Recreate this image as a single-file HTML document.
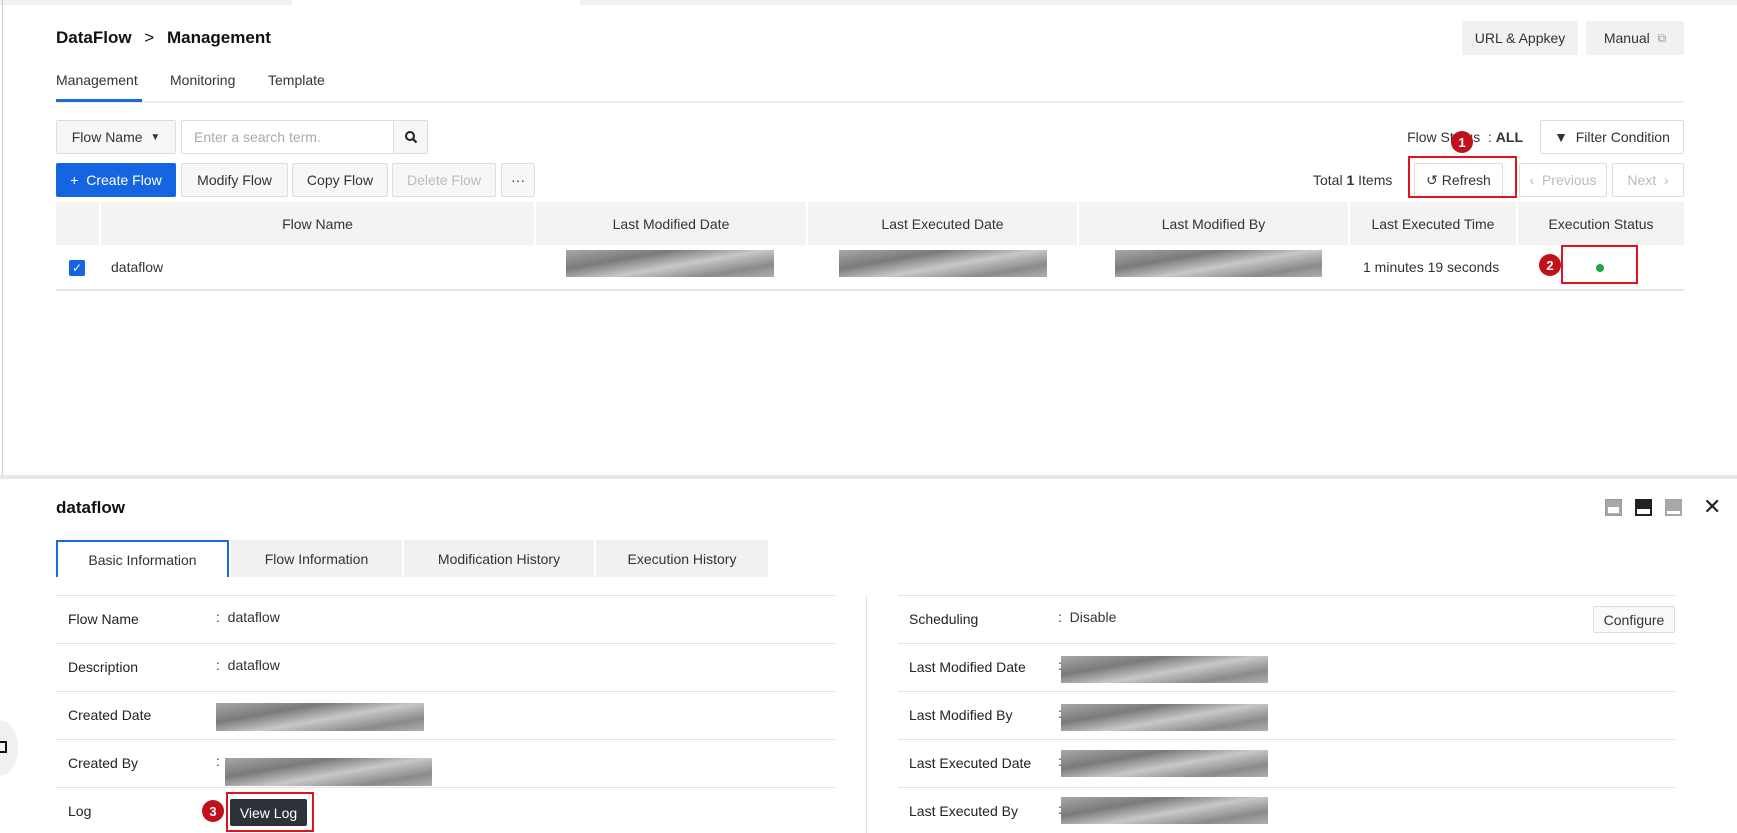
<!DOCTYPE html>
<html><head><meta charset="utf-8"><style>
*{box-sizing:border-box;margin:0;padding:0}
body{width:1737px;height:833px;overflow:hidden;background:#fff;font-family:"Liberation Sans",Arial,sans-serif;font-size:14px;color:#333;position:relative}
.a{position:absolute}
.btn{position:absolute;border:1px solid #ddd;background:#f7f7f7;display:flex;align-items:center;justify-content:center;font-size:14px;color:#333;border-radius:2px}
.blur{position:absolute;background:linear-gradient(170deg,#a8a8a8,#7a7a7a 30%,#c8c8c8 55%,#8a8a8a 80%,#b0b0b0)}
.th{position:absolute;top:202px;height:43px;background:#f3f3f3;display:flex;align-items:center;justify-content:center;font-size:14px;border-right:2px solid #fff}
.red{position:absolute;border:2px solid #e0141e}
.badge{position:absolute;width:22px;height:22px;border-radius:50%;background:#c0101a;color:#fff;font-weight:bold;font-size:13px;display:flex;align-items:center;justify-content:center}
.lbl{position:absolute;font-size:14px;color:#222}
.hl{position:absolute;height:1px;background:#e3e3e3}
</style></head><body>
<div class="a" style="left:0;top:0;width:1737px;height:5px;background:#f1f1f1"></div>
<div class="a" style="left:292px;top:0;width:288px;height:5px;background:#fff"></div>
<div class="a" style="left:2px;top:0;width:1px;height:476px;background:#ccc"></div>
<div class="a" style="left:56px;top:28px;font-size:17px;font-weight:bold;color:#111">DataFlow <span style="font-weight:normal;margin:0 8px">&gt;</span> Management</div>
<div class="btn" style="left:1462px;top:21px;width:116px;height:34px;background:#f1f1f1;border-color:#f1f1f1">URL &amp; Appkey</div>
<div class="btn" style="left:1586px;top:21px;width:98px;height:34px;background:#f1f1f1;border-color:#f1f1f1">Manual &nbsp;<span style="color:#999;font-size:12px">⧉</span></div>
<div class="a" style="left:56px;top:72px;font-size:14px">Management</div>
<div class="a" style="left:170px;top:72px;font-size:14px">Monitoring</div>
<div class="a" style="left:268px;top:72px;font-size:14px">Template</div>
<div class="a" style="left:56px;top:101px;width:1628px;height:2px;background:#eee"></div>
<div class="a" style="left:56px;top:99px;width:86px;height:3px;background:#1a6be0"></div>
<div class="btn" style="left:56px;top:120px;width:120px;height:34px;background:#f7f7f7">Flow Name &nbsp;<span style="font-size:10px">▼</span></div>
<div class="btn" style="left:181px;top:120px;width:213px;height:34px;background:#fff;justify-content:flex-start;padding-left:12px;color:#aaa">Enter a search term.</div>
<div class="btn" style="left:393px;top:120px;width:35px;height:34px;background:#f7f7f7"><svg width="14" height="14" viewBox="0 0 14 14"><circle cx="6" cy="6" r="4" fill="none" stroke="#222" stroke-width="2"/><path d="M9 9l3.5 3.5" stroke="#222" stroke-width="2.2"/></svg></div>
<div class="a" style="right:214px;top:129px;font-size:14px;white-space:nowrap">Flow Status &nbsp;: <b>ALL</b></div>
<div class="btn" style="left:1540px;top:120px;width:144px;height:34px;background:#fff">▼&nbsp; Filter Condition</div>
<div class="btn" style="left:56px;top:163px;width:120px;height:34px;background:#1565e0;border-color:#1565e0;color:#fff">+ &nbsp;Create Flow</div>
<div class="btn" style="left:181px;top:163px;width:107px;height:34px">Modify Flow</div>
<div class="btn" style="left:292px;top:163px;width:96px;height:34px">Copy Flow</div>
<div class="btn" style="left:392px;top:163px;width:104px;height:34px;color:#bbb">Delete Flow</div>
<div class="btn" style="left:501px;top:163px;width:34px;height:34px">···</div>
<div class="a" style="left:1313px;top:172px">Total <b>1</b> Items</div>
<div class="btn" style="left:1414px;top:163px;width:89px;height:34px;background:#fff">↺ Refresh</div>
<div class="btn" style="left:1519px;top:163px;width:88px;height:34px;background:#fff;color:#bbb">‹ &nbsp;Previous</div>
<div class="btn" style="left:1612px;top:163px;width:72px;height:34px;background:#fff;color:#bbb">Next &nbsp;›</div>
<div class="red" style="left:1408px;top:156px;width:109px;height:42px"></div>
<div class="badge" style="left:1451px;top:131px">1</div>
<div class="th" style="left:56px;width:45px"></div>
<div class="th" style="left:101px;width:435px">Flow Name</div>
<div class="th" style="left:536px;width:272px">Last Modified Date</div>
<div class="th" style="left:808px;width:271px">Last Executed Date</div>
<div class="th" style="left:1079px;width:271px">Last Modified By</div>
<div class="th" style="left:1350px;width:168px">Last Executed Time</div>
<div class="th" style="left:1518px;width:166px;border-right:0">Execution Status</div>
<div class="a" style="left:69px;top:260px;width:16px;height:16px;background:#1565e0;border-radius:2px;color:#fff;font-size:12px;text-align:center;line-height:16px">✓</div>
<div class="a" style="left:111px;top:259px">dataflow</div>
<div class="blur" style="left:566px;top:250px;width:208px;height:27px"></div>
<div class="blur" style="left:839px;top:250px;width:208px;height:27px"></div>
<div class="blur" style="left:1115px;top:250px;width:207px;height:27px"></div>
<div class="a" style="left:1363px;top:259px">1 minutes 19 seconds</div>
<div class="a" style="left:1596px;top:264px;width:8px;height:8px;border-radius:50%;background:#22a84a"></div>
<div class="red" style="left:1561px;top:245px;width:77px;height:39px"></div>
<div class="badge" style="left:1539px;top:254px">2</div>
<div class="a" style="left:56px;top:289px;width:1628px;height:2px;background:#e5e5e5"></div>
<div class="a" style="left:0;top:475px;width:1737px;height:4px;background:#e8e8e8"></div>
<div class="a" style="left:56px;top:498px;font-size:17px;font-weight:bold;color:#111">dataflow</div>
<div class="a" style="left:1605px;top:499px;width:17px;height:17px;background:#a8a8a8;border:1px solid #999"><div style="position:absolute;left:2px;right:2px;bottom:2px;height:6px;background:#fff"></div></div>
<div class="a" style="left:1635px;top:499px;width:17px;height:17px;background:#222"><div style="position:absolute;left:2px;right:2px;bottom:2px;height:5px;background:#fff"></div></div>
<div class="a" style="left:1665px;top:499px;width:17px;height:17px;background:#a8a8a8"><div style="position:absolute;left:2px;right:2px;bottom:2px;height:3px;background:#fff"></div></div>
<div class="a" style="left:1703px;top:494px;font-size:22px;color:#222">✕</div>
<div class="a" style="left:56px;top:540px;width:173px;height:37px;border:2px solid #1a6be0;border-bottom:0;display:flex;align-items:center;justify-content:center">Basic Information</div>
<div class="a" style="left:231px;top:540px;width:171px;height:37px;background:#f1f1f1;display:flex;align-items:center;justify-content:center">Flow Information</div>
<div class="a" style="left:404px;top:540px;width:190px;height:37px;background:#f1f1f1;display:flex;align-items:center;justify-content:center">Modification History</div>
<div class="a" style="left:596px;top:540px;width:172px;height:37px;background:#f1f1f1;display:flex;align-items:center;justify-content:center">Execution History</div>
<div class="hl" style="left:56px;top:595px;width:779px"></div>
<div class="hl" style="left:56px;top:643px;width:779px"></div>
<div class="hl" style="left:56px;top:691px;width:779px"></div>
<div class="hl" style="left:56px;top:739px;width:779px"></div>
<div class="hl" style="left:56px;top:787px;width:779px"></div>
<div class="a" style="left:866px;top:595px;width:1px;height:238px;background:#e3e3e3"></div>
<div class="lbl" style="left:68px;top:611px">Flow Name</div><div class="a" style="left:216px;top:609px">:&nbsp; dataflow</div>
<div class="lbl" style="left:68px;top:659px">Description</div><div class="a" style="left:216px;top:657px">:&nbsp; dataflow</div>
<div class="lbl" style="left:68px;top:707px">Created Date</div><div class="blur" style="left:216px;top:703px;width:208px;height:28px"></div>
<div class="lbl" style="left:68px;top:755px">Created By</div><div class="a" style="left:216px;top:753px">:</div><div class="blur" style="left:225px;top:758px;width:207px;height:28px"></div>
<div class="lbl" style="left:68px;top:803px">Log</div>
<div class="a" style="left:230px;top:799px;width:77px;height:27px;background:#2d3138;color:#fff;border-radius:2px;display:flex;align-items:center;justify-content:center;font-size:14px">View Log</div>
<div class="red" style="left:226px;top:792px;width:88px;height:40px"></div>
<div class="badge" style="left:202px;top:800px">3</div>
<div class="a" style="left:-20px;top:720px;width:38px;height:56px;border-radius:50%;background:#f0f0f0"></div>
<div class="a" style="left:0;top:741px;width:7px;height:12px;border:2px solid #111;border-left:0"></div>
<div class="hl" style="left:898px;top:595px;width:777px"></div>
<div class="hl" style="left:898px;top:643px;width:777px"></div>
<div class="hl" style="left:898px;top:691px;width:777px"></div>
<div class="hl" style="left:898px;top:739px;width:777px"></div>
<div class="hl" style="left:898px;top:787px;width:777px"></div>
<div class="lbl" style="left:909px;top:611px">Scheduling</div><div class="a" style="left:1058px;top:609px">:&nbsp; Disable</div>
<div class="btn" style="left:1593px;top:606px;width:82px;height:27px;background:#f9f9f9">Configure</div>
<div class="lbl" style="left:909px;top:659px">Last Modified Date</div><div class="a" style="left:1058px;top:657px">:</div><div class="blur" style="left:1061px;top:656px;width:207px;height:27px"></div>
<div class="lbl" style="left:909px;top:707px">Last Modified By</div><div class="a" style="left:1058px;top:705px">:</div><div class="blur" style="left:1061px;top:704px;width:207px;height:27px"></div>
<div class="lbl" style="left:909px;top:755px">Last Executed Date</div><div class="a" style="left:1058px;top:753px">:</div><div class="blur" style="left:1061px;top:750px;width:207px;height:27px"></div>
<div class="lbl" style="left:909px;top:803px">Last Executed By</div><div class="a" style="left:1058px;top:801px">:</div><div class="blur" style="left:1061px;top:797px;width:207px;height:27px"></div>
</body></html>
